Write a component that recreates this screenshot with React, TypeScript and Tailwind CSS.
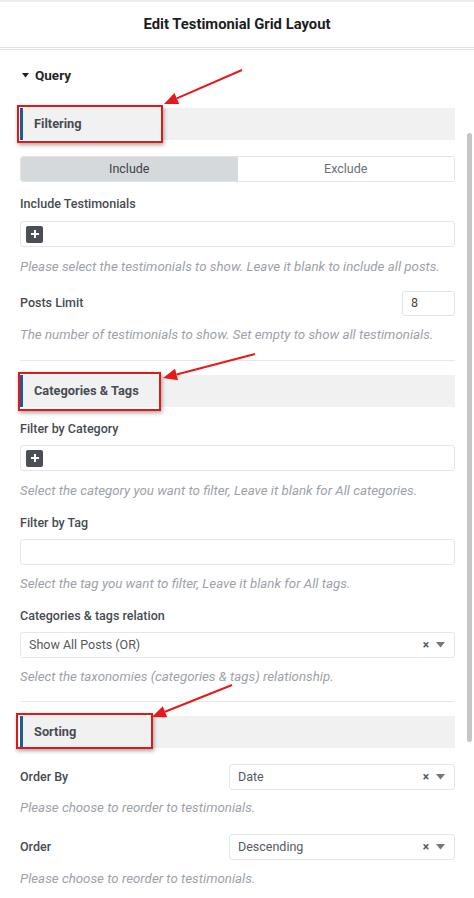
import React from "react";

const font = { fontFamily: "Roboto, 'Liberation Sans', sans-serif" };

function Band({ title, className = "" }: { title: string; className?: string }) {
  return (
    <div className={`flex h-8 items-center border-l-[3px] border-[#245b8f] bg-[#f1f1f1] pl-[11px] ${className}`}>
      <span className="text-[12.8px] font-bold text-[#474c52]">{title}</span>
    </div>
  );
}

function Label({ children, className = "" }: { children: React.ReactNode; className?: string }) {
  return (
    <div className={`flex h-5 items-center text-[12.5px] font-medium text-[#464b51] ${className}`}>
      {children}
    </div>
  );
}

function Help({ children, className = "" }: { children: React.ReactNode; className?: string }) {
  return (
    <div className={`flex h-[18px] items-center whitespace-nowrap text-[13.3px] italic text-[#9da2a9] ${className}`}>
      {children}
    </div>
  );
}

function PlusBox({ className = "" }: { className?: string }) {
  return (
    <div className={`flex h-[26px] items-center rounded-[3px] border border-[#e4e6e8] bg-white pl-[5px] ${className}`}>
      <div className="flex h-[17px] w-[17px] shrink-0 items-center justify-center rounded-[2px] bg-[#4a4f56]">
        <svg width="10" height="10" viewBox="0 0 10 10">
          <path d="M5 1v8M1 5h8" stroke="white" strokeWidth="2" />
        </svg>
      </div>
    </div>
  );
}

function Select({ value, className = "" }: { value: string; className?: string }) {
  return (
    <div className={`flex h-[26px] items-center justify-between rounded-[3px] border border-[#e4e6e8] bg-white pl-2 pr-[9px] ${className}`}>
      <span className="text-[12.5px] text-[#555a60]">{value}</span>
      <div className="flex items-center gap-[7px]">
        <span className="text-[12px] font-bold leading-none text-[#555]">×</span>
        <svg width="9" height="6" viewBox="0 0 9 6">
          <path d="M0 0h9L4.5 5.5z" fill="#777" />
        </svg>
      </div>
    </div>
  );
}

function Arrow({ x1, y1, x2, y2 }: { x1: number; y1: number; x2: number; y2: number }) {
  const a = Math.atan2(y2 - y1, x2 - x1);
  const len = 14;
  const w = 6;
  const bx = x2 - len * Math.cos(a);
  const by = y2 - len * Math.sin(a);
  const px = -Math.sin(a) * w;
  const py = Math.cos(a) * w;
  return (
    <g>
      <line x1={x1} y1={y1} x2={bx} y2={by} stroke="#e8191b" strokeWidth="2" />
      <path d={`M${x2} ${y2}L${bx + px} ${by + py}L${bx - px} ${by - py}z`} fill="#e8191b" />
    </g>
  );
}

export default function App() {
  return (
    <div className="relative h-[898px] w-[474px] overflow-hidden bg-white" style={font}>
      <div className="h-[2px] bg-[#ececec]" />
      <div className="flex h-[48px] items-center justify-center border-b-[3px] border-double border-[#e2e2e2]">
        <span className="text-[14.8px] font-bold text-[#1d1d1d]">Edit Testimonial Grid Layout</span>
      </div>

      <div className="pl-5 pr-[19px]">
        <div className="mt-3 flex h-[26px] items-center gap-[6px]">
          <svg width="7" height="5" viewBox="0 0 7 5" className="ml-[2px]">
            <path d="M0 0h7L3.5 4.5z" fill="#222" />
          </svg>
          <span className="text-[13.5px] font-bold text-[#262626]">Query</span>
        </div>

        <Band title="Filtering" className="mt-5" />

        <div className="mt-4 flex h-[26px] overflow-hidden rounded-[3px] border border-[#e2e4e6]">
          <div className="flex flex-1 items-center justify-center bg-[#d6d9dc] text-[12.5px] text-[#3d4247]">Include</div>
          <div className="flex flex-1 items-center justify-center bg-white text-[12.5px] text-[#6a6f75]">Exclude</div>
        </div>

        <Label className="mt-3">Include Testimonials</Label>
        <PlusBox className="mt-[7px]" />
        <Help className="mt-[11px]">Please select the testimonials to show. Leave it blank to include all posts.</Help>

        <div className="mt-[15px] flex h-[25px] items-center justify-between">
          <span className="text-[12.5px] font-medium text-[#464b51]">Posts Limit</span>
          <div className="flex h-[25px] w-[53px] items-center rounded-[3px] border border-[#e0e2e4] pl-2 text-[12.5px] text-[#444]">8</div>
        </div>
        <Help className="mt-[10px]">The number of testimonials to show. Set empty to show all testimonials.</Help>

        <div className="mt-4 h-px bg-[#e6e8ea]" />

        <Band title="Categories & Tags" className="mt-[14px]" />

        <Label className="mt-3">Filter by Category</Label>
        <PlusBox className="mt-[6px]" />
        <Help className="mt-[11px]">Select the category you want to filter, Leave it blank for All categories.</Help>

        <Label className="mt-[13px]">Filter by Tag</Label>
        <div className="mt-[6px] h-[26px] rounded-[3px] border border-[#e4e6e8]" />
        <Help className="mt-[10px]">Select the tag you want to filter, Leave it blank for All tags.</Help>

        <Label className="mt-[13px]">Categories &amp; tags relation</Label>
        <Select value="Show All Posts (OR)" className="mt-[6px]" />
        <Help className="mt-[10px]">Select the taxonomies (categories &amp; tags) relationship.</Help>

        <div className="mt-[15px] h-px bg-[#e6e8ea]" />

        <Band title="Sorting" className="mt-[14px]" />

        <div className="mt-4 flex h-[26px] items-center justify-between">
          <span className="text-[12.5px] font-medium text-[#464b51]">Order By</span>
          <Select value="Date" className="w-[226px]" />
        </div>
        <Help className="mt-[9px]">Please choose to reorder to testimonials.</Help>

        <div className="mt-[17px] flex h-[26px] items-center justify-between">
          <span className="text-[12.5px] font-medium text-[#464b51]">Order</span>
          <Select value="Descending" className="w-[226px]" />
        </div>
        <Help className="mt-[10px]">Please choose to reorder to testimonials.</Help>
      </div>

      {/* scrollbar thumb */}
      <div className="absolute left-[467px] top-[133px] h-[609px] w-[5px] rounded-full bg-[#c6c6c6]" />

      {/* annotation boxes */}
      <div className="absolute left-[17px] top-[105px] h-[38px] w-[146px] border-2 border-[#e3161a] shadow-[1px_2px_4px_rgba(0,0,0,0.35)]" />
      <div className="absolute left-[18px] top-[372px] h-[39px] w-[143px] border-2 border-[#e3161a] shadow-[1px_2px_4px_rgba(0,0,0,0.35)]" />
      <div className="absolute left-[16px] top-[713px] h-[36px] w-[137px] border-2 border-[#e3161a] shadow-[1px_2px_4px_rgba(0,0,0,0.35)]" />

      <svg className="pointer-events-none absolute left-0 top-0" width="474" height="898">
        <Arrow x1={242} y1={70} x2={164} y2={104} />
        <Arrow x1={255} y1={354} x2={163} y2={378} />
        <Arrow x1={232} y1={685} x2={152} y2={717} />
      </svg>
    </div>
  );
}
